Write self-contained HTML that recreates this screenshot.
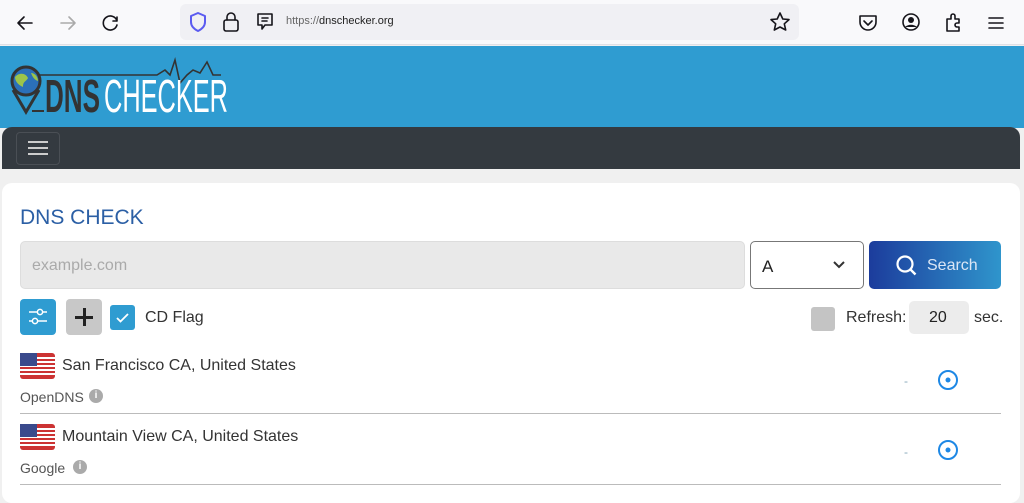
<!DOCTYPE html>
<html><head><style>
*{box-sizing:border-box;margin:0;padding:0}
body{width:1024px;height:488px;overflow:hidden;background:#f0f0f0;font-family:"Liberation Sans",sans-serif;position:relative}
.abs{position:absolute}
.ff{background:#f9f9fb;top:0;left:0;width:1024px;height:45px;border-bottom:1px solid #e0e0e6}
.url{left:180px;top:4px;width:619px;height:36px;background:#f0f0f4;border-radius:6px}
.ico{stroke:#15141a;fill:none;stroke-width:1.6;stroke-linecap:round;stroke-linejoin:round}
.hdr{top:46px;left:0;width:1024px;height:82px;background:#2f9cd1}
.nav{top:127px;left:2px;width:1018px;height:42px;background:#343a40;border-radius:10px 10px 0 0}
.card{top:183px;left:2px;width:1018px;height:320px;background:#fff;border-radius:10px}
.t{font-family:"Liberation Sans",sans-serif}
</style></head><body>
<div class="abs ff"></div>
<svg class="abs" style="left:14px;top:12px" width="22" height="22"><path class="ico" d="M18 11H4M10 5l-6 6 6 6"/></svg>
<svg class="abs" style="left:57px;top:12px" width="22" height="22"><path class="ico" style="stroke:#aaa" d="M4 11h14M12 5l6 6-6 6"/></svg>
<svg class="abs" style="left:100px;top:11px" width="22" height="22"><path class="ico" d="M17 6v4h-4M17 10a7 7 0 1 0 0 4"/></svg>
<div class="abs url"></div>
<svg class="abs" style="left:188px;top:11px" width="20" height="22"><path class="ico" style="stroke:#5b5bf0;stroke-width:2" d="M10 2l7 3v6c0 4-3 7-7 9-4-2-7-5-7-9V5z"/></svg>
<svg class="abs" style="left:221px;top:10px" width="20" height="24"><rect class="ico" x="3" y="10" width="14" height="11" rx="2"/><path class="ico" d="M6 10V7a4 4 0 0 1 8 0v3"/></svg>
<svg class="abs" style="left:255px;top:11px" width="20" height="22"><path class="ico" d="M3 3h14v11h-7l-3 4v-4H3zM7 7h6M7 10h5"/></svg>
<div class="abs" style="left:286px;top:15px;font-size:11px;color:#666">https://<span style="color:#222">dnschecker.org</span></div>
<svg class="abs" style="left:769px;top:11px" width="22" height="22"><path class="ico" d="M11 2l2.8 6 6.2.6-4.7 4.2 1.4 6.2L11 16l-5.7 3 1.4-6.2L2 8.6 8.2 8z"/></svg>
<svg class="abs" style="left:857px;top:12px" width="22" height="22"><path class="ico" d="M3 4h16v6a8 8 0 0 1-16 0zM7 9l4 4 4-4"/></svg>
<svg class="abs" style="left:900px;top:11px" width="22" height="22"><circle class="ico" cx="11" cy="11" r="8"/><circle cx="11" cy="9" r="3" fill="#15141a"/><path d="M5 16c3-3 9-3 12 0" fill="#15141a"/></svg>
<svg class="abs" style="left:943px;top:11px" width="22" height="22"><path class="ico" d="M4 8h4V5a2 2 0 0 1 4 0v3h4v4h-2a2 2 0 0 0 0 4h2v4H4z"/></svg>
<svg class="abs" style="left:985px;top:12px" width="22" height="22"><path class="ico" d="M4 6h14M4 11h14M4 16h14"/></svg>

<div class="abs hdr"></div>
<svg class="abs" style="left:0;top:56px" width="240" height="64">
<path d="M25 19 H157 L165 14 L170 19 L175 4 L180 27 L187 19 L193 14 L200 17 L207 6 L213 19 H221" fill="none" stroke="#333" stroke-width="1.6"/>
<path d="M32 55 H44" stroke="#333" stroke-width="2"/>
<circle cx="26" cy="25" r="14" fill="#2b70b8" stroke="#333" stroke-width="3"/>
<path d="M15 21c4-5 11-4 13 1-2 4-5 3-5 9-5-2-8-6-8-10zM31 17c4 0 7 4 7 8-3-1-5-3-7-8z" fill="#9cc44a"/>
<path d="M13 34 L26 56 L39 34" fill="none" stroke="#333" stroke-width="3"/>
<text x="45" y="56" font-family="Liberation Sans,sans-serif" font-weight="bold" font-size="46" fill="#333" textLength="55" lengthAdjust="spacingAndGlyphs">DNS</text>
<text x="104" y="56" font-family="Liberation Sans,sans-serif" font-size="46" fill="#fff" textLength="124" lengthAdjust="spacingAndGlyphs">CHECKER</text>
</svg>
<div class="abs nav"></div>
<div class="abs" style="left:16px;top:132px;width:44px;height:33px;border:1px solid #4a4f55;border-radius:4px"></div>
<div class="abs" style="left:28px;top:141px;width:20px;height:2px;background:#ccc;box-shadow:0 6px 0 #ccc,0 12px 0 #ccc"></div>

<div class="abs card"></div>
<div class="abs t" style="left:20px;top:206px;font-size:21px;color:#2b5fa5">DNS CHECK</div>
<div class="abs" style="left:20px;top:241px;width:725px;height:48px;background:#e9e9e9;border-radius:5px;border:1px solid #ddd"></div>
<div class="abs t" style="left:32px;top:257px;font-size:16px;color:#aaa">example.com</div>
<div class="abs" style="left:750px;top:241px;width:114px;height:48px;border:1px solid #777;border-radius:5px;background:#fff"></div>
<div class="abs t" style="left:762px;top:257px;font-size:17px;color:#222">A</div>
<svg class="abs" style="left:832px;top:260px" width="14" height="10"><path d="M2 2l5 5 5-5" fill="none" stroke="#333" stroke-width="2"/></svg>
<div class="abs" style="left:869px;top:241px;width:132px;height:48px;border-radius:5px;background:linear-gradient(90deg,#1c3c9c,#2f95cc)"></div>
<svg class="abs" style="left:895px;top:254px" width="24" height="24"><circle cx="10" cy="10" r="7.5" fill="none" stroke="#fff" stroke-width="2.2"/><path d="M15.5 15.5l5 5" stroke="#fff" stroke-width="2.4"/></svg>
<div class="abs t" style="left:927px;top:257px;font-size:16px;color:#dbe6f5">Search</div>

<div class="abs" style="left:20px;top:299px;width:36px;height:36px;background:#2f9cd1;border-radius:4px"></div>
<svg class="abs" style="left:26px;top:305px" width="24" height="24"><path d="M3 7h18M3 16h18" stroke="#fff" stroke-width="1.6"/><circle cx="14" cy="7" r="2.6" fill="#2f9cd1" stroke="#fff" stroke-width="1.5"/><circle cx="9" cy="16" r="2.6" fill="#2f9cd1" stroke="#fff" stroke-width="1.5"/></svg>
<div class="abs" style="left:66px;top:299px;width:36px;height:36px;background:#c8c8c8;border-radius:4px"></div>
<div class="abs" style="left:75px;top:316px;width:18px;height:3px;background:#222"></div>
<div class="abs" style="left:82.5px;top:308px;width:3px;height:18px;background:#222"></div>
<div class="abs" style="left:110px;top:305px;width:25px;height:25px;background:#2f9cd1;border-radius:3px"></div>
<svg class="abs" style="left:114px;top:309px" width="17" height="17"><path d="M3 9l3.5 3.5L14 5" fill="none" stroke="#fff" stroke-width="1.8"/></svg>
<div class="abs t" style="left:145px;top:309px;font-size:16px;color:#333">CD Flag</div>

<div class="abs" style="left:811px;top:307px;width:24px;height:24px;background:#c4c4c4;border-radius:3px"></div>
<div class="abs t" style="left:846px;top:309px;font-size:16px;color:#333">Refresh:</div>
<div class="abs" style="left:909px;top:301px;width:60px;height:33px;background:#ececec;border-radius:5px"></div>
<div class="abs t" style="left:929px;top:309px;font-size:16px;color:#222">20</div>
<div class="abs t" style="left:974px;top:309px;font-size:16px;color:#333">sec.</div>

<svg class="abs" style="left:20px;top:353px" width="35" height="26"><rect width="35" height="26" rx="3" fill="#c33"/><g fill="#fff"><rect y="4" width="35" height="2"/><rect y="8" width="35" height="2"/><rect y="12" width="35" height="2"/><rect y="16" width="35" height="2"/><rect y="20" width="35" height="2"/></g><rect width="17" height="13" fill="#3a4a8c"/></svg>
<div class="abs t" style="left:62px;top:357px;font-size:16px;color:#333">San Francisco CA, United States</div>
<div class="abs t" style="left:20px;top:389px;font-size:14px;color:#555">OpenDNS</div>
<div class="abs" style="left:89px;top:389px;width:14px;height:14px;border-radius:50%;background:#aaa;color:#fff;font-size:10px;text-align:center;line-height:14px;font-weight:bold">i</div>
<div class="abs" style="left:904px;top:374px;font-size:12px;color:#8ab">-</div>
<svg class="abs" style="left:937px;top:369px" width="22" height="22"><circle cx="11" cy="11" r="9" fill="none" stroke="#1e88e5" stroke-width="2"/><circle cx="11" cy="11" r="2.5" fill="#1e88e5"/></svg>
<div class="abs" style="left:20px;top:413px;width:981px;height:1px;background:#bbb"></div>

<svg class="abs" style="left:20px;top:424px" width="35" height="26"><rect width="35" height="26" rx="3" fill="#c33"/><g fill="#fff"><rect y="4" width="35" height="2"/><rect y="8" width="35" height="2"/><rect y="12" width="35" height="2"/><rect y="16" width="35" height="2"/><rect y="20" width="35" height="2"/></g><rect width="17" height="13" fill="#3a4a8c"/></svg>
<div class="abs t" style="left:62px;top:428px;font-size:16px;color:#333">Mountain View CA, United States</div>
<div class="abs t" style="left:20px;top:460px;font-size:14px;color:#555">Google</div>
<div class="abs" style="left:73px;top:460px;width:14px;height:14px;border-radius:50%;background:#aaa;color:#fff;font-size:10px;text-align:center;line-height:14px;font-weight:bold">i</div>
<div class="abs" style="left:904px;top:445px;font-size:12px;color:#8ab">-</div>
<svg class="abs" style="left:937px;top:439px" width="22" height="22"><circle cx="11" cy="11" r="9" fill="none" stroke="#1e88e5" stroke-width="2"/><circle cx="11" cy="11" r="2.5" fill="#1e88e5"/></svg>
<div class="abs" style="left:20px;top:484px;width:981px;height:1px;background:#bbb"></div>
</body></html>
